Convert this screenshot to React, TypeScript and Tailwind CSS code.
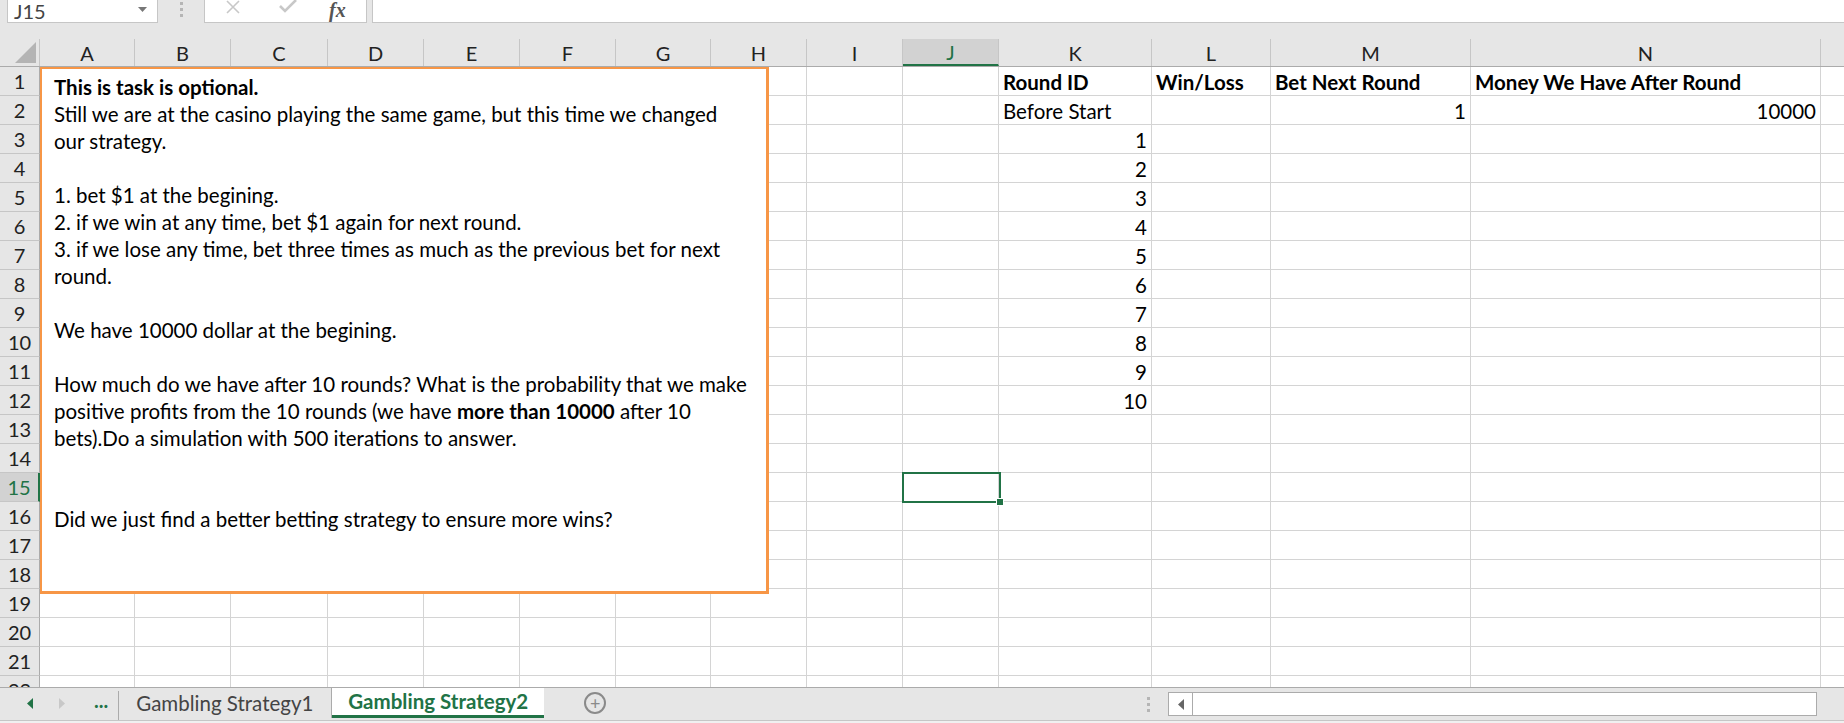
import React from "react";

const COLS: { l: string; w: string }[] = [
  { l: "A", w: "w-[95px]" },
  { l: "B", w: "w-[96px]" },
  { l: "C", w: "w-[97px]" },
  { l: "D", w: "w-[96px]" },
  { l: "E", w: "w-[96px]" },
  { l: "F", w: "w-[96px]" },
  { l: "G", w: "w-[95px]" },
  { l: "H", w: "w-[96px]" },
  { l: "I", w: "w-[96px]" },
  { l: "J", w: "w-[96px]" },
  { l: "K", w: "w-[153px]" },
  { l: "L", w: "w-[119px]" },
  { l: "M", w: "w-[200px]" },
  { l: "N", w: "w-[350px]" },
  { l: "O", w: "w-[80px]" },
];

type Cell = { t: string; b?: boolean; r?: boolean };
const DATA: Record<string, Cell> = {
  "1-K": { t: "Round ID", b: true },
  "1-L": { t: "Win/Loss", b: true },
  "1-M": { t: "Bet Next Round", b: true },
  "1-N": { t: "Money We Have After Round", b: true },
  "2-K": { t: "Before Start" },
  "2-M": { t: "1", r: true },
  "2-N": { t: "10000", r: true },
};
for (let i = 1; i <= 10; i++) DATA[`${i + 2}-K`] = { t: String(i), r: true };

const ROWS = Array.from({ length: 22 }, (_, i) => i + 1);

function TextBox() {
  const lines: React.ReactNode[] = [
    <b key="b">This is task is optional.</b>,
    "Still we are at the casino playing the same game, but this time we changed",
    "our strategy.",
    "",
    "1. bet $1 at the begining.",
    "2. if we win at any time, bet $1 again for next round.",
    "3. if we lose any time, bet three times as much as the previous bet for next",
    "round.",
    "",
    "We have 10000 dollar at the begining.",
    "",
    "How much do we have after 10 rounds? What is the probability that we make",
    <span key="m">
      positive profits from the 10 rounds (we have <b>more than 10000</b> after 10
    </span>,
    "bets).Do a simulation with 500 iterations to answer.",
    "",
    "",
    "Did we just find a better betting strategy to ensure more wins?",
  ];
  return (
    <div className="absolute left-[-1px] top-[-1px] w-[730px] h-[528px] border-[3px] border-[#f79646] bg-white pl-[12px] pt-[5px] text-[20.5px] text-black">
      {lines.map((l, i) => (
        <div key={i} className="h-[27px] leading-[27px] whitespace-nowrap">
          {l}
        </div>
      ))}
    </div>
  );
}

export default function App() {
  return (
    <div className="w-[1844px] h-[723px] overflow-hidden bg-[#e6e6e6] font-[Lato,sans-serif] flex flex-col select-none">
      {/* formula bar */}
      <div className="h-[23px] flex shrink-0">
        <div className="ml-[7px] w-[151px] h-[23px] shrink-0 bg-white border border-t-0 border-[#c6c6c6] flex items-center justify-between pl-[6px] pr-[10px]">
          <span className="text-[20px] text-[#444] leading-none -mt-[1px]">J15</span>
          <svg width="9" height="5" viewBox="0 0 9 5" className="-mt-[4px]">
            <polygon points="0,0 9,0 4.5,5" fill="#777" />
          </svg>
        </div>
        <div className="w-[46px] shrink-0 flex justify-center">
          <div className="flex flex-col gap-[3px] pt-[2px]">
            <div className="w-[3px] h-[3px] bg-[#b5b5b5]" />
            <div className="w-[3px] h-[3px] bg-[#b5b5b5]" />
            <div className="w-[3px] h-[3px] bg-[#b5b5b5]" />
          </div>
        </div>
        <div className="w-[163px] h-[23px] shrink-0 bg-white border border-t-0 border-[#c6c6c6] relative">
          <svg width="14" height="14" viewBox="0 0 14 14" className="absolute left-[21px] top-[0px]">
            <path d="M1 1 L13 13 M13 1 L1 13" stroke="#c8c8c8" strokeWidth="1.6" />
          </svg>
          <svg width="18" height="14" viewBox="0 0 18 14" className="absolute left-[74px] top-[0px]">
            <path d="M1 6 L6 11 L17 0" stroke="#c8c8c8" strokeWidth="2.6" fill="none" />
          </svg>
          <span className="absolute left-[124px] top-[0px] text-[20px] leading-[20px] italic font-bold text-[#555] font-['Liberation_Serif',serif]">
            fx
          </span>
        </div>
        <div className="ml-[5px] flex-1 h-[23px] bg-white border border-t-0 border-r-0 border-[#c6c6c6]" />
      </div>
      <div className="h-[16px] shrink-0" />
      {/* column headers */}
      <div className="h-[28px] flex shrink-0 border-b border-[#ababab]">
        <div className="w-[40px] shrink-0 h-full relative border-r border-[#c6c6c6]">
          <svg width="22" height="22" viewBox="0 0 22 22" className="absolute left-[15px] top-[3px]">
            <polygon points="21,0 21,21 0,21" fill="#b4b4b4" />
          </svg>
        </div>
        {COLS.map((c) =>
          c.l === "J" ? (
            <div
              key={c.l}
              className={`${c.w} shrink-0 h-full bg-[#d2d2d2] border-r border-[#c6c6c6] border-b-2 border-b-[#217346] flex items-center justify-center text-[20px] text-[#217346]`}
            >
              {c.l}
            </div>
          ) : (
            <div
              key={c.l}
              className={`${c.w} shrink-0 h-full border-r border-[#c6c6c6] flex items-center justify-center text-[20px] text-[#222]`}
            >
              {c.l === "O" ? "" : c.l}
            </div>
          )
        )}
      </div>
      {/* body */}
      <div className="relative flex-1 overflow-hidden bg-white">
        {ROWS.map((r) => (
          <div key={r} className="h-[29px] flex">
            {r === 15 ? (
              <div className="w-[40px] shrink-0 h-full bg-[#d2d2d2] border-b border-[#c6c6c6] border-r-2 border-r-[#217346] flex items-center justify-center text-[20px] text-[#217346]">
                {r}
              </div>
            ) : (
              <div className="w-[40px] shrink-0 h-full bg-[#e6e6e6] border-b border-[#c6c6c6] border-r border-r-[#ababab] flex items-center justify-center text-[20px] text-[#222]">
                {r}
              </div>
            )}
            {COLS.map((c) => {
              const d = DATA[`${r}-${c.l}`];
              return (
                <div
                  key={c.l}
                  className={`${c.w} shrink-0 h-full border-r border-b border-[#d4d4d4] flex items-center px-[4px] pt-[2px] text-[20.5px] text-black whitespace-nowrap overflow-hidden ${
                    d?.r ? "justify-end" : "justify-start"
                  } ${d?.b ? "font-bold" : ""}`}
                >
                  {d?.t}
                </div>
              );
            })}
          </div>
        ))}
        {/* overlay area */}
        <div className="absolute left-[40px] top-0 right-0 bottom-0 overflow-hidden">
          <TextBox />
          <div className="absolute left-[862px] top-[405px] w-[99px] h-[31px] border-2 border-[#217346]">
            <div className="absolute right-[-5px] bottom-[-5px] w-[8px] h-[8px] bg-[#217346] border border-white" />
          </div>
        </div>
      </div>
      {/* tab bar */}
      <div className="h-[36px] shrink-0 border-t border-[#ababab] flex items-start relative">
        <div className="h-[30px] flex items-center shrink-0">
          <svg width="6" height="11" viewBox="0 0 6 11" className="ml-[27px]">
            <polygon points="6,0 6,11 0,5.5" fill="#217346" />
          </svg>
          <svg width="6" height="11" viewBox="0 0 6 11" className="ml-[26px]">
            <polygon points="0,0 0,11 6,5.5" fill="#c8c8c8" />
          </svg>
          <span className="ml-[29px] text-[20px] font-bold text-[#217346] leading-none -mt-[6px]">...</span>
        </div>
        <div className="ml-[10px] h-[30px] border-l border-[#ababab] mt-[3px]" />
        <div className="w-[213px] h-[30px] shrink-0 flex items-center pl-[17px] text-[20.5px] text-[#444] border-r border-[#ababab]">
          Gambling Strategy1
        </div>
        <div className="w-[212px] h-[30px] shrink-0 bg-white border-b-[3px] border-[#217346] flex items-center justify-center text-[20.5px] font-bold text-[#217346]">
          Gambling Strategy2
        </div>
        <div className="ml-[40px] h-[30px] flex items-center">
          <div className="w-[22px] h-[22px] rounded-full border-2 border-[#8a8a8a] flex items-center justify-center text-[#8a8a8a] text-[18px] leading-none">
            +
          </div>
        </div>
        <div className="absolute left-[1147px] top-[9px] flex flex-col gap-[3px]">
          <div className="w-[3px] h-[3px] bg-[#b5b5b5]" />
          <div className="w-[3px] h-[3px] bg-[#b5b5b5]" />
          <div className="w-[3px] h-[3px] bg-[#b5b5b5]" />
        </div>
        <div className="absolute left-[1168px] top-[4px] w-[649px] h-[24px] bg-white border border-[#ababab] flex">
          <div className="w-[24px] h-full border-r border-[#ababab] flex items-center justify-center">
            <svg width="6" height="11" viewBox="0 0 6 11">
              <polygon points="6,0 6,11 0,5.5" fill="#666" />
            </svg>
          </div>
        </div>
        <div className="absolute left-0 right-0 bottom-0 h-[3px] border-t border-[#c6c6c6] bg-[#f0f0f0]" />
      </div>
    </div>
  );
}
